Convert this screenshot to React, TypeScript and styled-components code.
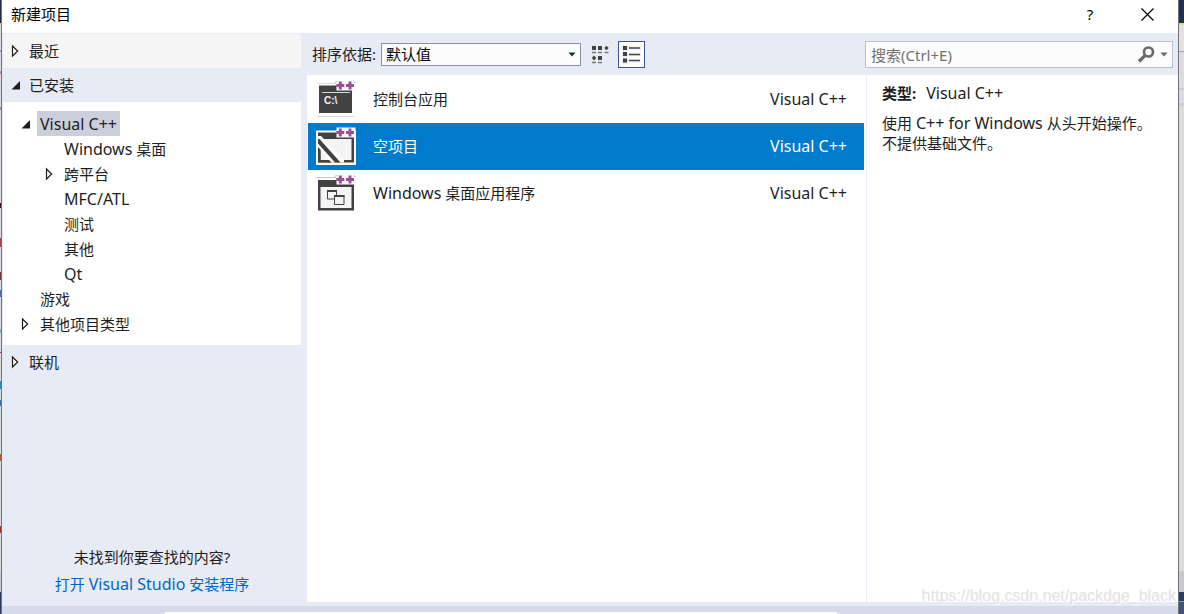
import React, { useState } from "react";
import styled, { createGlobalStyle } from "styled-components";

const GlobalStyle = createGlobalStyle`
  *, *::before, *::after { box-sizing: border-box; }
  body {
    margin: 0;
    background: #dcdcde;
    color: #1e1e1e;
    font-family: "Noto Sans", "Noto Sans CJK SC", sans-serif;
    font-size: 15px;
    line-height: 20px;
  }
  button, input, select { font: inherit; color: inherit; }
`;

const Desktop = styled.div`
  position: relative;
  display: flex;
  min-height: 100vh;
`;

const LeftEdge = styled.div`
  width: 1px;
  background: linear-gradient(
    #1f2c4a 0 23px, #e6d68a 23px 25px, #dcdcde 25px 50px, #8e9bbc 50px 52px,
    #dcdcde 52px 71px, #b08a9c 71px 74px, #dcdcde 74px 107px, #b08a9c 107px 110px,
    #dcdcde 110px 203px, #3a1414 203px 208px, #dcdcde 208px 238px, #a04848 238px 247px,
    #dcdcde 247px 272px, #7a3434 272px 280px, #dcdcde 280px 290px, #4a6fb0 290px 297px,
    #dcdcde 297px 329px, #7fb4c0 329px 333px, #dcdcde 333px 352px, #7a2a8a 352px 353px,
    #dcdcde 353px 381px, #2e8ab0 381px 389px, #dcdcde 389px 400px, #3b6fc0 400px 406px,
    #dcdcde 406px 454px, #b05a30 454px 461px, #dcdcde 461px 526px, #a03030 526px 533px,
    #dcdcde 533px 571px, #c9c9cd 571px 592px, #2b3a5e 592px 100%
  );
`;

const RightEdge = styled.div`
  width: 5px;
  background: linear-gradient(
    #1f2f4f 0 23px, #e6d68a 23px 25px, #e2e2e4 25px 51px, #97a5be 51px 52px,
    #dcdce0 52px 88px, #cbccd4 88px 90px, #dcdce0 90px 103px, #cbccd4 103px 106px,
    #dcdadb 106px 571px, #c9c9cd 571px 592px, #2b3a5e 592px 601px,
    #8c99b8 601px 602px, #40527c 602px 100%
  );
`;

const Dialog = styled.div`
  flex: 1;
  min-width: 0;
  display: flex;
  flex-direction: column;
  background: #e6ebf5;
  border: solid #70737a;
  border-width: 0 1px;
`;

const TitleBar = styled.header`
  display: flex;
  align-items: center;
  height: 33px;
  padding: 0 9px 5px 9px;
  background: #fff;
  color: #000;
`;

const Title = styled.h1`
  flex: 1;
  margin: 0;
  font-size: 15px;
  font-weight: 400;
`;

const CaptionButton = styled.button`
  display: grid;
  place-items: center;
  width: 44px;
  height: 28px;
  margin-left: 13px;
  padding: 0;
  border: 0;
  background: none;
`;

const Body = styled.div`
  flex: 1;
  display: flex;
  gap: 6px;
  padding: 1px 0 0 1px;
`;

const Sidebar = styled.nav`
  display: flex;
  flex-direction: column;
  width: 298px;
`;

const SectionButton = styled.button<{ $shaded?: boolean }>`
  display: flex;
  align-items: center;
  gap: 2px;
  height: 34px;
  padding: 0 8px;
  border: 0;
  background: ${(p) => (p.$shaded ? "#f5f5f5" : "transparent")};
  text-align: left;
`;

const Arrow = styled.span`
  display: flex;
  flex: none;
  width: 16px;
`;

const Tree = styled.div`
  display: flex;
  flex-direction: column;
  padding: 9px 0;
  background: #fff;
`;

const TreeItem = styled.button<{ $level: number }>`
  display: flex;
  align-items: center;
  height: 25px;
  padding: 0 0 0 ${(p) => 18 + p.$level * 24}px;
  border: 0;
  background: none;
  text-align: left;
`;

const TreeLabel = styled.span<{ $selected: boolean }>`
  padding: 2px 3px 0;
  line-height: 23px;
  background: ${(p) => (p.$selected ? "#cccedb" : "transparent")};
`;

const Latin = styled.span`
  font-size: 16px;
`;

const SidebarNote = styled.div`
  margin-top: auto;
  padding-bottom: 8px;
  line-height: 27px;
  text-align: center;
`;

const InstallerLink = styled.a`
  display: block;
  color: #0066cc;
  text-decoration: none;
`;

const Main = styled.main`
  flex: 1;
  min-width: 0;
  display: flex;
  flex-direction: column;
  padding-bottom: 4px;
`;

const Toolbar = styled.div`
  display: flex;
  align-items: center;
  height: 41px;
  padding: 0 5px;
`;

const SortLabel = styled.label`
  padding-bottom: 2px;
`;

const SelectBox = styled.div`
  position: relative;
  width: 200px;
  margin: 0 6px 0 5px;
`;

const SortSelect = styled.select`
  display: block;
  appearance: none;
  width: 100%;
  height: 23px;
  padding: 0 20px 2px 4px;
  border: 1px solid #8591a8;
  border-radius: 0;
  background: #fcfcfc;
  color: #000;
  line-height: 20px;
`;

const SelectArrow = styled.svg`
  position: absolute;
  top: 9px;
  right: 5px;
  pointer-events: none;
`;

const ViewButton = styled.button<{ $active?: boolean }>`
  display: grid;
  place-items: center;
  width: 27px;
  height: 27px;
  margin-right: ${(p) => (p.$active ? 0 : 4)}px;
  padding: 0;
  border: 1px solid ${(p) => (p.$active ? "#3c5587" : "transparent")};
  background: ${(p) => (p.$active ? "#fffcf4" : "none")};
`;

const SearchBox = styled.div`
  display: flex;
  align-items: center;
  width: 308px;
  height: 27px;
  margin-left: auto;
  padding: 0 4px 0 5px;
  border: 1px solid #b8c0d2;
  background: #fcfcfc;
`;

const SearchInput = styled.input`
  flex: 1;
  min-width: 0;
  padding: 0;
  border: 0;
  outline: 0;
  background: none;
  &::placeholder { color: #717171; opacity: 1; }
`;

const SearchButton = styled.button`
  display: flex;
  align-items: center;
  gap: 5px;
  padding: 0;
  border: 0;
  background: none;
`;

const Panes = styled.div`
  flex: 1;
  display: flex;
  background: #fff;
`;

const TemplateList = styled.div`
  flex: 1;
  min-width: 0;
  padding: 1px 2px 0 1px;
  border-right: 1px solid #e6ebf5;
`;

const TemplateRow = styled.button<{ $selected: boolean }>`
  display: flex;
  align-items: center;
  gap: 17px;
  width: 100%;
  height: 47px;
  padding: 0 17px 0 8px;
  border: 0;
  background: ${(p) => (p.$selected ? "#007acc" : "#fff")};
  color: ${(p) => (p.$selected ? "#fff" : "#1e1e1e")};
  text-align: left;
`;

const TemplateText = styled.span<{ $grow?: boolean }>`
  flex: ${(p) => (p.$grow ? 1 : "none")};
  padding-bottom: 2px;
`;

const Details = styled.section`
  width: 311px;
  padding: 8px 15px;
`;

const TypeLine = styled.p`
  display: flex;
  gap: 10px;
  margin: 0 0 10px;
`;

const Description = styled.p`
  margin: 0;
`;

const Footer = styled.footer`
  height: 8px;
  padding: 6px 341px 0 163px;
  background: #d6dbe9;
`;

const FooterField = styled.div`
  height: 2px;
  background: #fff;
`;

const Watermark = styled.div`
  position: absolute;
  right: 8px;
  bottom: 8px;
  color: #e3e3e5;
  font-family: "Liberation Sans", sans-serif;
  font-size: 16px;
  text-shadow: 1px 1px 0 #fafafa;
  pointer-events: none;
`;

/* Sets the Latin runs of a mixed label one size up from the Chinese ones. */
function Mixed({ text }: { text: string }) {
  return (
    <>
      {text.split(/([A-Za-z+/]+(?: [A-Za-z+/]+)*)/).map((part, i) =>
        i % 2 ? <Latin key={i}>{part}</Latin> : part
      )}
    </>
  );
}

function Expander({ open }: { open?: boolean }) {
  return (
    <svg width="10" height="14" viewBox="0 0 10 14" aria-hidden="true">
      {open ? (
        <path d="M9 3v8.500H0.500z" fill="#1e1e1e" />
      ) : (
        <path d="M1.500 2v10L6.700 7z" fill="#fff" stroke="#1e1e1e" strokeWidth="1.200" />
      )}
    </svg>
  );
}

function PlusPlus() {
  return (
    <>
      <path d="M20.500 0.500H39.500V10.500H20.500z" fill="#fcfcfc" />
      <path
        d="M20.300 5.500h8M24.300 1.500v8M30 5.500h8M34 1.500v8"
        stroke="#9b4f96"
        strokeWidth="3"
        fill="none"
      />
    </>
  );
}

type Kind = "console" | "empty" | "desktop";

function TemplateIcon({ kind }: { kind: Kind }) {
  return (
    <svg width="40" height="39" viewBox="0 0 40 39" aria-hidden="true">
      {kind === "console" && (
        <>
          <path d="M1 3.500H20M1 36.500H38" stroke="#dadada" />
          <path d="M3 5.500H36V33H3z" fill="#424242" />
          <path d="M6 12.500H34" stroke="#d8d8d8" />
          <text x="8" y="24" fill="#f4f4f4" fontFamily="Liberation Sans, sans-serif" fontWeight="700" fontSize="10">
            C:\
          </text>
        </>
      )}
      {kind === "empty" && (
        <>
          <path d="M0 3.500H40V38H0z" fill="#fcfcfc" />
          <path d="M2 5.500H38V35.500H2z" fill="#424242" />
          <path d="M4.500 12H35.500V33H4.500z" fill="#f4f4f5" />
          <path d="M2 9L5 9L28 33V35.500H15L2 21z" fill="#fcfcfc" />
          <path d="M2 20V35.500H15.500L13 33H4.500V22.500z" fill="#424242" />
          <path d="M2 12V16.500L19 35.500H24.500L3.500 12z" fill="#424242" />
        </>
      )}
      {kind === "desktop" && (
        <>
          <path d="M0 3.500H20" stroke="#c4c4c4" />
          <path d="M2 6H38V36.500H2z" fill="#424242" />
          <path d="M4.500 13H35.500V34H4.500z" fill="#f4f4f5" />
          <path d="M11.500 16.500h9v8.500h-9z" fill="#f4f4f5" stroke="#424242" />
          <path d="M11 17h10" stroke="#424242" strokeWidth="2" />
          <path d="M18.500 21.500h9.500v9h-9.500z" fill="#f4f4f5" stroke="#424242" />
          <path d="M18 22h10.500" stroke="#424242" strokeWidth="2" />
        </>
      )}
      <PlusPlus />
      {kind !== "empty" && (
        <path d="M19.500 3.500V1.500H22M38 0.500V2.500H40" fill="none" stroke="#cfcfcf" />
      )}
    </svg>
  );
}

const tree = [
  { label: "Visual C++", level: 0, open: true },
  { label: "Windows 桌面", level: 1 },
  { label: "跨平台", level: 1, open: false },
  { label: "MFC/ATL", level: 1 },
  { label: "测试", level: 1 },
  { label: "其他", level: 1 },
  { label: "Qt", level: 1 },
  { label: "游戏", level: 0 },
  { label: "其他项目类型", level: 0, open: false },
];

const templates: { name: string; kind: Kind }[] = [
  { name: "控制台应用", kind: "console" },
  { name: "空项目", kind: "empty" },
  { name: "Windows 桌面应用程序", kind: "desktop" },
];

export default function App() {
  const [node, setNode] = useState("Visual C++");
  const [template, setTemplate] = useState("空项目");

  return (
    <>
      <GlobalStyle />
      <Desktop>
        <LeftEdge />
        <Dialog role="dialog" aria-labelledby="dialog-title">
          <TitleBar>
            <Title id="dialog-title">新建项目</Title>
            <CaptionButton aria-label="帮助">?</CaptionButton>
            <CaptionButton aria-label="关闭">
              <svg width="13" height="13" viewBox="0 0 13 13" aria-hidden="true">
                <path d="M0.500 0.500L12.500 12.500M12.500 0.500L0.500 12.500" stroke="#000" strokeWidth="1.200" />
              </svg>
            </CaptionButton>
          </TitleBar>

          <Body>
            <Sidebar>
              <SectionButton $shaded>
                <Arrow><Expander /></Arrow>最近
              </SectionButton>
              <SectionButton>
                <Arrow><Expander open /></Arrow>已安装
              </SectionButton>
              <Tree>
                {tree.map((item) => (
                  <TreeItem key={item.label} $level={item.level} onClick={() => setNode(item.label)}>
                    <Arrow>{item.open !== undefined && <Expander open={item.open} />}</Arrow>
                    <TreeLabel $selected={item.label === node}>
                      <Mixed text={item.label} />
                    </TreeLabel>
                  </TreeItem>
                ))}
              </Tree>
              <SectionButton>
                <Arrow><Expander /></Arrow>联机
              </SectionButton>
              <SidebarNote>
                未找到你要查找的内容?
                <InstallerLink href="#installer">
                  <Mixed text="打开 Visual Studio 安装程序" />
                </InstallerLink>
              </SidebarNote>
            </Sidebar>

            <Main>
              <Toolbar>
                <SortLabel htmlFor="sort">排序依据:</SortLabel>
                <SelectBox>
                  <SortSelect id="sort">
                    <option>默认值</option>
                  </SortSelect>
                  <SelectArrow width="8" height="5" viewBox="0 0 8 5" aria-hidden="true">
                    <path d="M0.500 0.500H7.500L4 4.500z" fill="#1b293e" />
                  </SelectArrow>
                </SelectBox>
                <ViewButton aria-label="中等图标">
                  <svg width="17" height="19" viewBox="0 0 17 19" aria-hidden="true">
                    <path d="M0 1h4v4H0zM6 1h4v4H6zM6 11h4v4H6z" fill="#424242" />
                    <path d="M14.500 0.800l2.200 2.200l-2.200 2.200L12.300 3zM2 10.600l2.300 2.400l-2.300 2.400L-0.300 13z" fill="#424242" />
                    <path d="M0 7.500h4M6 7.500h4M12.500 7.500h4M0 17.500h4M6 17.500h4" stroke="#77787c" strokeWidth="1.400" />
                  </svg>
                </ViewButton>
                <ViewButton $active aria-label="小图标">
                  <svg width="19" height="19" viewBox="0 0 19 19" aria-hidden="true">
                    <path d="M0 0h6v6H0zM0 6.500h6v6H0zM0 13h6v6H0zM6 1.500h13v3H6zM6 8h13v3H6zM6 14.500h13v3H6z" fill="#e6ebf5" />
                    <path d="M1 1h4v4H1zM1 7h4v4H1zM1 13.500h4v4H1z" fill="#424242" />
                    <path d="M7 3h11M7 9.500h11M7 15.500h11" stroke="#424a60" strokeWidth="1.400" />
                  </svg>
                </ViewButton>
                <SearchBox>
                  <SearchInput type="text" aria-label="搜索" placeholder="搜索(Ctrl+E)" />
                  <SearchButton aria-label="搜索选项">
                    <svg width="18" height="18" viewBox="0 0 18 18" aria-hidden="true">
                      <circle cx="11.500" cy="6" r="4.500" fill="none" stroke="#6a6a6a" strokeWidth="2.700" />
                      <path d="M8 9.500L2 15.500" stroke="#6a6a6a" strokeWidth="3.200" />
                    </svg>
                    <svg width="8" height="5" viewBox="0 0 8 5" aria-hidden="true">
                      <path d="M0.500 0.500H7.500L4 4.500z" fill="#6a6a6a" />
                    </svg>
                  </SearchButton>
                </SearchBox>
              </Toolbar>

              <Panes>
                <TemplateList>
                  {templates.map((t) => (
                    <TemplateRow key={t.name} $selected={t.name === template} onClick={() => setTemplate(t.name)}>
                      <TemplateIcon kind={t.kind} />
                      <TemplateText $grow><Mixed text={t.name} /></TemplateText>
                      <TemplateText><Latin>Visual C++</Latin></TemplateText>
                    </TemplateRow>
                  ))}
                </TemplateList>
                <Details>
                  <TypeLine>
                    <strong>类型:</strong>
                    <Latin>Visual C++</Latin>
                  </TypeLine>
                  <Description>
                    <Mixed text="使用 C++ for Windows 从头开始操作。" />
                    <br />
                    不提供基础文件。
                  </Description>
                </Details>
              </Panes>
            </Main>
          </Body>

          <Footer>
            <FooterField />
          </Footer>
        </Dialog>
        <RightEdge />
        <Watermark>https://blog.csdn.net/packdge_black</Watermark>
      </Desktop>
    </>
  );
}
